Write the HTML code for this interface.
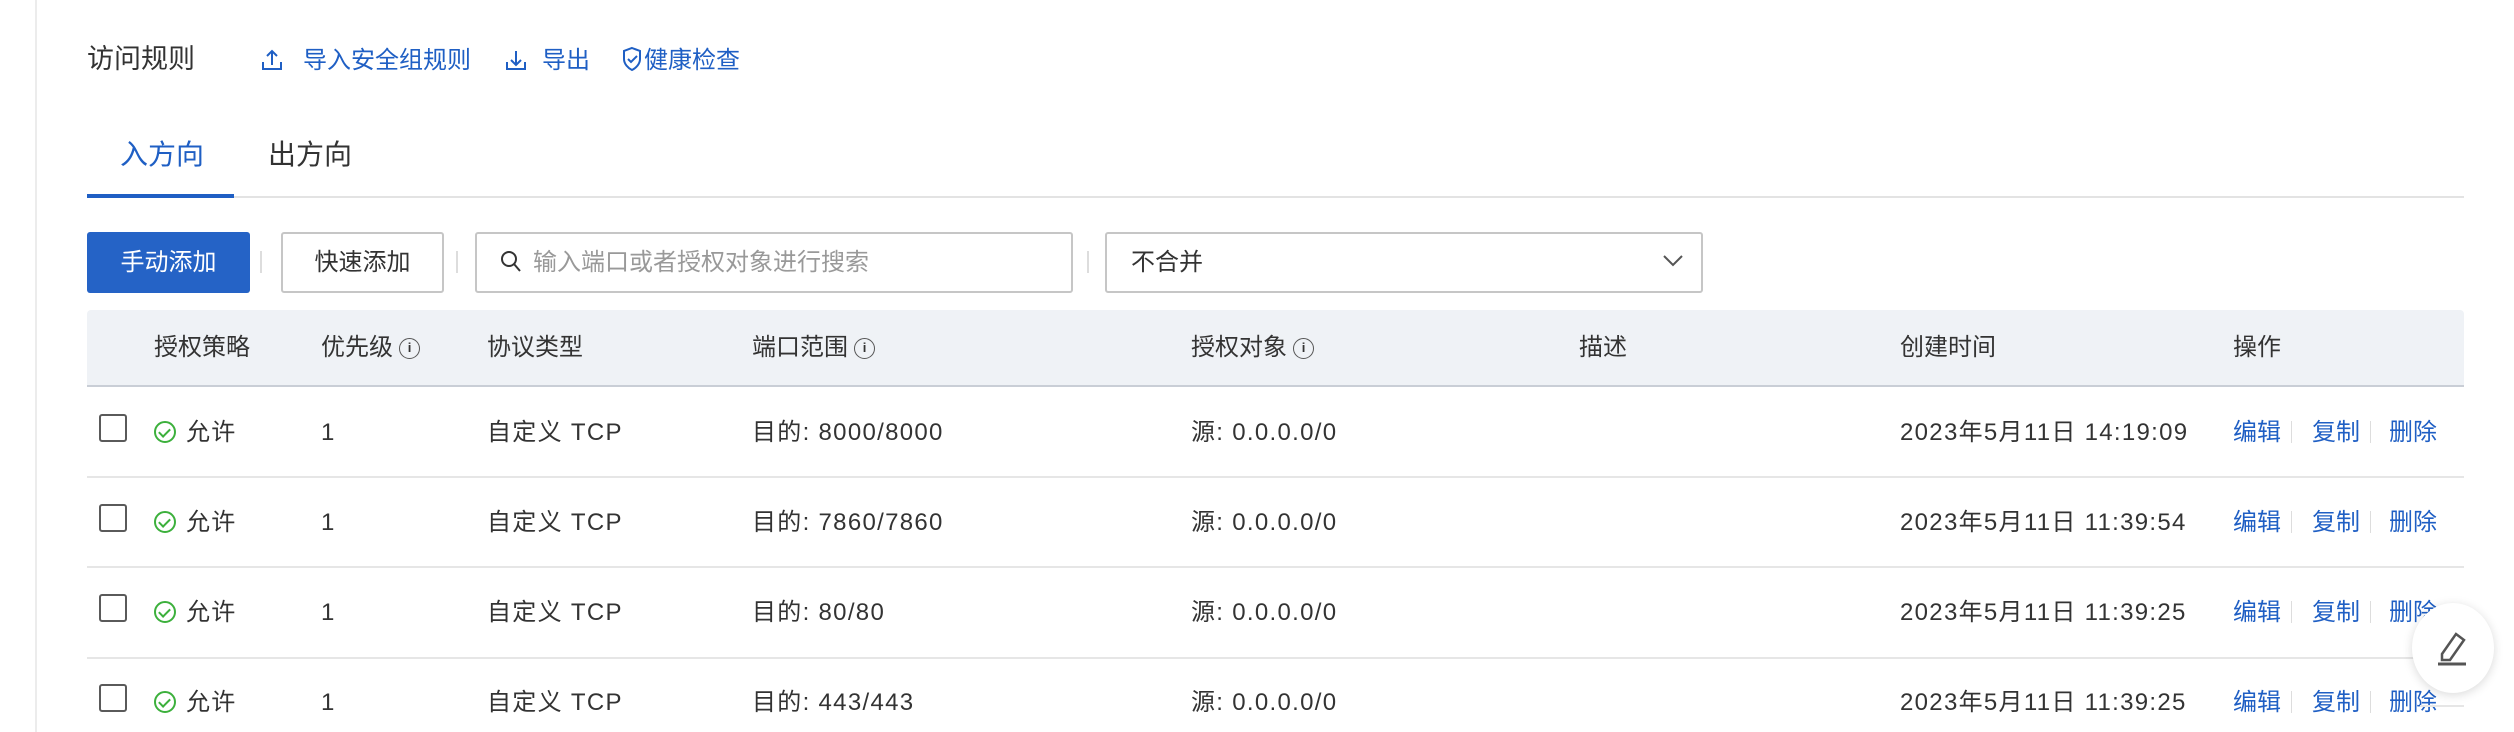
<!DOCTYPE html>
<html><head><meta charset="utf-8"><style>
*{box-sizing:border-box;margin:0;padding:0}
html,body{width:2514px;height:732px;overflow:hidden}
body{background:#fff;position:relative;font-family:"Liberation Sans","Noto Sans CJK SC",sans-serif;color:#333;font-size:24px;letter-spacing:1.3px}
.a{position:absolute;white-space:nowrap;line-height:30px}
.b{color:#1f5fc4}
.v{top:0;left:35px;width:2px;height:732px;background:#ececec}
.hd{position:absolute;left:87px;top:310px;width:2377px;height:77px;background:#eff2f6;border-bottom:2px solid #c9ced6;border-radius:4px 4px 0 0}
.ln{position:absolute;left:87px;width:2377px;height:2px;background:#e6e6e6}
.cb{position:absolute;left:99px;width:28px;height:28px;border:2px solid #5a5a5a;border-radius:3px}
.ok{position:absolute;left:154px;width:22px;height:22px;border:2px solid #3cb03c;border-radius:50%}
.ok:after{content:"";position:absolute;left:5px;top:3px;width:5px;height:9px;border:solid #3cb03c;border-width:0 2px 2px 0;transform:rotate(45deg)}
.i{display:inline-block;width:21px;height:21px;border:1.5px solid #555;border-radius:50%;font-size:13px;text-align:center;line-height:18px;vertical-align:middle;margin-left:6px;font-weight:bold;letter-spacing:0}
.sep{position:absolute;width:2px;height:22px;background:#ddd}
</style></head><body>
<div class="a v"></div>
<div class="a" style="left:87px;top:44px;font-size:27px;letter-spacing:0">访问规则</div>
<svg class="a" style="left:261px;top:48px" width="22" height="24" viewBox="0 0 22 24"><path d="M11 3v14M6 8l5-5 5 5M2 14v7h18v-7" fill="none" stroke="#1f5fc4" stroke-width="2"/></svg>
<div class="a b" style="left:303px;top:46px;letter-spacing:0">导入安全组规则</div>
<svg class="a" style="left:505px;top:48px" width="22" height="24" viewBox="0 0 22 24"><path d="M11 3v14M6 12l5 5 5-5M2 14v7h18v-7" fill="none" stroke="#1f5fc4" stroke-width="2"/></svg>
<div class="a b" style="left:542px;top:46px;letter-spacing:0">导出</div>
<svg class="a" style="left:621px;top:46px" width="22" height="26" viewBox="0 0 22 26"><path d="M11 2l8 3v8c0 5-4 9-8 11-4-2-8-6-8-11V5z M7 13l3 3 6-6" fill="none" stroke="#1f5fc4" stroke-width="2"/></svg>
<div class="a b" style="left:644px;top:46px;letter-spacing:0">健康检查</div>
<div class="a b" style="left:120px;top:140px;font-size:28px;letter-spacing:0">入方向</div>
<div class="a" style="left:268px;top:140px;font-size:28px;letter-spacing:0">出方向</div>
<div class="a" style="left:87px;top:196px;width:2377px;height:2px;background:#e3e3e3"></div>
<div class="a" style="left:87px;top:194px;width:147px;height:4px;background:#1f5fc4"></div>
<div class="a" style="left:87px;top:232px;width:163px;height:61px;background:#2563c6;border-radius:3px;color:#fff;text-align:center;line-height:61px;letter-spacing:0">手动添加</div>
<div class="sep" style="left:260px;top:251px"></div>
<div class="a" style="left:281px;top:232px;width:163px;height:61px;border:2px solid #c6c6c6;border-radius:3px;text-align:center;line-height:57px;letter-spacing:0">快速添加</div>
<div class="sep" style="left:456px;top:251px"></div>
<div class="a" style="left:475px;top:232px;width:598px;height:61px;border:2px solid #c6c6c6;border-radius:3px;color:#999;line-height:57px;padding-left:56px;letter-spacing:0">输入端口或者授权对象进行搜索</div>
<svg class="a" style="left:500px;top:250px" width="22" height="24" viewBox="0 0 22 24"><circle cx="9" cy="9" r="7" fill="none" stroke="#333" stroke-width="2"/><path d="M14 14l6 7" stroke="#333" stroke-width="2"/></svg>
<div class="sep" style="left:1087px;top:251px"></div>
<div class="a" style="left:1105px;top:232px;width:598px;height:61px;border:2px solid #c6c6c6;border-radius:3px;line-height:57px;padding-left:24px;letter-spacing:0">不合并</div>
<svg class="a" style="left:1662px;top:254px" width="22" height="14" viewBox="0 0 22 14"><path d="M2 2l9 9 9-9" fill="none" stroke="#555" stroke-width="2"/></svg>
<div class="hd"></div>
<div class="a" style="left:154px;top:333px;letter-spacing:0">授权策略</div>
<div class="a" style="left:321px;top:333px;letter-spacing:0">优先级<span class="i">i</span></div>
<div class="a" style="left:487px;top:333px;letter-spacing:0">协议类型</div>
<div class="a" style="left:752px;top:333px;letter-spacing:0">端口范围<span class="i">i</span></div>
<div class="a" style="left:1191px;top:333px;letter-spacing:0">授权对象<span class="i">i</span></div>
<div class="a" style="left:1579px;top:333px;letter-spacing:0">描述</div>
<div class="a" style="left:1900px;top:333px;letter-spacing:0">创建时间</div>
<div class="a" style="left:2233px;top:333px;letter-spacing:0">操作</div>
<div class="ln" style="top:476px"></div><div class="ln" style="top:566px"></div><div class="ln" style="top:657px"></div>

<div class="cb" style="top:414px"></div><div class="ok" style="top:421px"></div>
<div class="a" style="left:186px;top:418px">允许</div><div class="a" style="left:321px;top:418px">1</div><div class="a" style="left:487px;top:418px">自定义 TCP</div><div class="a" style="left:752px;top:418px">目的: 8000/8000</div><div class="a" style="left:1191px;top:418px">源: 0.0.0.0/0</div><div class="a" style="left:1900px;top:418px">2023年5月11日 14:19:09</div>
<div class="a b" style="left:2233px;top:418px;letter-spacing:0">编辑</div><div class="sep" style="left:2291px;top:421px;width:1px"></div><div class="a b" style="left:2312px;top:418px;letter-spacing:0">复制</div><div class="sep" style="left:2370px;top:421px;width:1px"></div><div class="a b" style="left:2389px;top:418px;letter-spacing:0">删除</div>

<div class="cb" style="top:504px"></div><div class="ok" style="top:511px"></div>
<div class="a" style="left:186px;top:508px">允许</div><div class="a" style="left:321px;top:508px">1</div><div class="a" style="left:487px;top:508px">自定义 TCP</div><div class="a" style="left:752px;top:508px">目的: 7860/7860</div><div class="a" style="left:1191px;top:508px">源: 0.0.0.0/0</div><div class="a" style="left:1900px;top:508px">2023年5月11日 11:39:54</div>
<div class="a b" style="left:2233px;top:508px;letter-spacing:0">编辑</div><div class="sep" style="left:2291px;top:511px;width:1px"></div><div class="a b" style="left:2312px;top:508px;letter-spacing:0">复制</div><div class="sep" style="left:2370px;top:511px;width:1px"></div><div class="a b" style="left:2389px;top:508px;letter-spacing:0">删除</div>

<div class="cb" style="top:594px"></div><div class="ok" style="top:601px"></div>
<div class="a" style="left:186px;top:598px">允许</div><div class="a" style="left:321px;top:598px">1</div><div class="a" style="left:487px;top:598px">自定义 TCP</div><div class="a" style="left:752px;top:598px">目的: 80/80</div><div class="a" style="left:1191px;top:598px">源: 0.0.0.0/0</div><div class="a" style="left:1900px;top:598px">2023年5月11日 11:39:25</div>
<div class="a b" style="left:2233px;top:598px;letter-spacing:0">编辑</div><div class="sep" style="left:2291px;top:601px;width:1px"></div><div class="a b" style="left:2312px;top:598px;letter-spacing:0">复制</div><div class="sep" style="left:2370px;top:601px;width:1px"></div><div class="a b" style="left:2389px;top:598px;letter-spacing:0">删除</div>

<div class="cb" style="top:684px"></div><div class="ok" style="top:691px"></div>
<div class="a" style="left:186px;top:688px">允许</div><div class="a" style="left:321px;top:688px">1</div><div class="a" style="left:487px;top:688px">自定义 TCP</div><div class="a" style="left:752px;top:688px">目的: 443/443</div><div class="a" style="left:1191px;top:688px">源: 0.0.0.0/0</div><div class="a" style="left:1900px;top:688px">2023年5月11日 11:39:25</div>
<div class="a b" style="left:2233px;top:688px;letter-spacing:0">编辑</div><div class="sep" style="left:2291px;top:691px;width:1px"></div><div class="a b" style="left:2312px;top:688px;letter-spacing:0">复制</div><div class="sep" style="left:2370px;top:691px;width:1px"></div><div class="a b" style="left:2389px;top:688px;letter-spacing:0">删除</div>

<div class="a" style="left:2420px;top:705px;width:44px;height:2px;background:#e6e6e6"></div>
<div class="a" style="left:2412px;top:603px;width:82px;height:90px;border-radius:50%;background:#fff;box-shadow:0 2px 10px rgba(0,0,0,.15)"></div>
<svg class="a" style="left:2434px;top:628px" width="36" height="40" viewBox="0 0 36 40"><path d="M8 26l14-20 8 6-14 20H8z" fill="none" stroke="#555" stroke-width="2.5"/><path d="M4 36h28" stroke="#555" stroke-width="3"/></svg>
</body></html>
